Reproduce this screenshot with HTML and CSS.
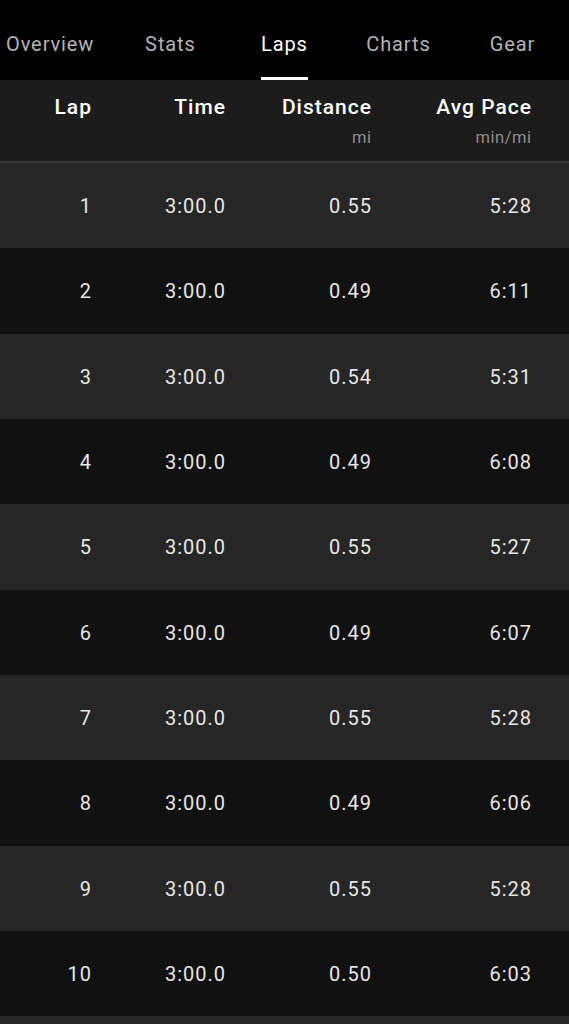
FILE: index.html
```html
<!DOCTYPE html>
<html>
<head>
<meta charset="utf-8">
<link rel="stylesheet" href="styles.css">
</head>
<body>
<nav class="tabs">
  <div class="tab tab-first"><span class="tab-label">Overview</span></div>
  <div class="tab"><span class="tab-label">Stats</span></div>
  <div class="tab tab-active"><span class="tab-label">Laps</span></div>
  <div class="tab"><span class="tab-label">Charts</span></div>
  <div class="tab"><span class="tab-label">Gear</span></div>
</nav>
<div class="table">
  <div class="head">
    <div class="hcell"><span class="htitle">Lap</span></div>
    <div class="hcell"><span class="htitle">Time</span></div>
    <div class="hcell"><span class="htitle">Distance</span><span class="hunit">mi</span></div>
    <div class="hcell"><span class="htitle">Avg Pace</span><span class="hunit">min/mi</span></div>
  </div>
  <div class="row odd"><span class="cell">1</span><span class="cell">3:00.0</span><span class="cell">0.55</span><span class="cell">5:28</span></div>
  <div class="row even"><span class="cell">2</span><span class="cell">3:00.0</span><span class="cell">0.49</span><span class="cell">6:11</span></div>
  <div class="row odd"><span class="cell">3</span><span class="cell">3:00.0</span><span class="cell">0.54</span><span class="cell">5:31</span></div>
  <div class="row even"><span class="cell">4</span><span class="cell">3:00.0</span><span class="cell">0.49</span><span class="cell">6:08</span></div>
  <div class="row odd"><span class="cell">5</span><span class="cell">3:00.0</span><span class="cell">0.55</span><span class="cell">5:27</span></div>
  <div class="row even"><span class="cell">6</span><span class="cell">3:00.0</span><span class="cell">0.49</span><span class="cell">6:07</span></div>
  <div class="row odd"><span class="cell">7</span><span class="cell">3:00.0</span><span class="cell">0.55</span><span class="cell">5:28</span></div>
  <div class="row even"><span class="cell">8</span><span class="cell">3:00.0</span><span class="cell">0.49</span><span class="cell">6:06</span></div>
  <div class="row odd"><span class="cell">9</span><span class="cell">3:00.0</span><span class="cell">0.55</span><span class="cell">5:28</span></div>
  <div class="row even"><span class="cell">10</span><span class="cell">3:00.0</span><span class="cell">0.50</span><span class="cell">6:03</span></div>
  <div class="row odd row-rest"></div>
</div>
</body>
</html>
```
FILE: styles.css
```css
html, body {
  margin: 0;
  padding: 0;
  background: #000;
  font-family: Roboto, "Liberation Sans", sans-serif;
  overflow: hidden;
}

.tabs {
  display: flex;
  height: 80px;
  background: #000;
  white-space: nowrap;
  overflow: hidden;
}

.tab {
  flex: 0 0 114px;
  box-sizing: border-box;
  padding-top: 32px;
  text-align: center;
}

.tab-first {
  flex-basis: 113px;
  padding-left: 6px;
  text-align: left;
}

.tab-label {
  display: inline-block;
  font-size: 20px;
  line-height: 24px;
  letter-spacing: 0.9px;
  margin-right: -0.9px;
  color: #b3b3b3;
}

.tab-active .tab-label {
  color: #fff;
  padding-bottom: 21px;
  border-bottom: 3px solid #fff;
}

.head,
.row {
  display: grid;
  grid-template-columns: 91px 134px 146px 160px;
  padding-right: 38px;
}

.head {
  background: #1c1c1c;
  box-sizing: border-box;
  padding-top: 15px;
  border-bottom: 2px solid #383838;
  height: 83px;
}

.hcell {
  display: flex;
  flex-direction: column;
  align-items: flex-end;
}

.htitle {
  font-size: 21px;
  font-weight: 500;
  line-height: 24px;
  letter-spacing: 1px;
  margin-right: -1px;
  color: #fff;
}

.hunit {
  margin-top: 9px;
  font-size: 16.5px;
  line-height: 19px;
  letter-spacing: 0.5px;
  margin-right: -0.5px;
  color: #8e8e8e;
}

.row {
  height: 85.33px;
  align-items: center;
  padding-top: 1px;
  box-sizing: border-box;
}

.odd {
  background: #262626;
}

.even {
  background: #111111;
}

.cell {
  text-align: right;
  font-size: 20px;
  line-height: 24px;
  letter-spacing: 1px;
  margin-right: -1px;
  color: #e6e6e6;
}
```
